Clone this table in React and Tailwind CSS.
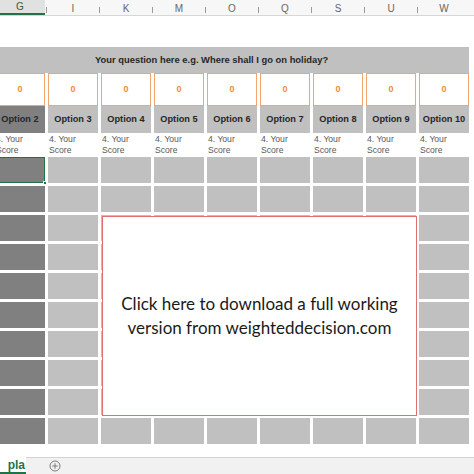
import React from "react";

const letters = ["G", "I", "K", "M", "O", "Q", "S", "U", "W"];
const options = [2, 3, 4, 5, 6, 7, 8, 9, 10];
const rows = Array.from({ length: 10 }, (_, i) => i);

export default function App() {
  return (
    <div className="relative w-[474px] h-[474px] overflow-hidden bg-white font-['Liberation_Sans',Arial,sans-serif]">
      <div className="-ml-[5px] w-[479px] flex flex-col">
        {/* column letters */}
        <div className="flex h-[16px] border-b border-[#d6d6d6] bg-[#f7f7f7]">
          {letters.map((l, i) => (
            <div key={l} className="flex">
              <div
                className={`w-[50px] flex items-end justify-center pb-[1px] text-[10px] leading-none ${
                  i === 0
                    ? "bg-[#e1e1e1] text-[#2d5e3e] border-b-2 border-[#217346]"
                    : "text-[#666]"
                }`}
              >
                {l}
              </div>
              {i < letters.length - 1 && (
                <div className="w-[3px] flex items-end justify-center pb-[2px]">
                  <div className="w-px h-[6px] bg-[#9a9a9a]" />
                </div>
              )}
            </div>
          ))}
        </div>

        <div className="h-[31px]" />

        {/* question */}
        <div className="h-[26px] w-[474px] bg-[#c0c0c0] flex items-center pl-[100px] text-[9.4px] font-bold text-[#262626]">
          Your question here e.g. Where shall I go on holiday?
        </div>

        {/* totals */}
        <div className="flex gap-[3px] h-[33px]">
          {options.map((o) => (
            <div
              key={o}
              className="w-[50px] border border-[#f0a66c] flex items-center justify-center text-[9px] font-bold text-[#ed8c3c]"
            >
              0
            </div>
          ))}
        </div>

        {/* option names */}
        <div className="flex gap-[3px] h-[27px]">
          {options.map((o, i) => (
            <div
              key={o}
              className={`w-[50px] flex items-center justify-center text-[9.2px] font-bold text-[#262626] ${
                i === 0 ? "bg-[#808080]" : "bg-[#c0c0c0]"
              }`}
            >
              Option {o}
            </div>
          ))}
        </div>

        {/* score labels */}
        <div className="flex gap-[3px] h-[24px]">
          {options.map((o) => (
            <div key={o} className="w-[50px] pl-[1px] pt-[1px] text-[8.6px] leading-[11px] text-[#595959]">
              4. Your
              <br />
              Score
            </div>
          ))}
        </div>

        {/* score cells */}
        <div className="flex flex-col gap-[3px]">
          {rows.map((r) => (
            <div key={r} className="flex gap-[3px] h-[26px]">
              {options.map((o, i) => (
                <div
                  key={o}
                  className={`relative w-[50px] ${i === 0 ? "bg-[#808080]" : "bg-[#c0c0c0]"} ${
                    i === 0 && r === 0 ? "border border-[#217346]" : ""
                  }`}
                >
                  {i === 0 && r === 0 && (
                    <div className="absolute -right-[3px] -bottom-[3px] w-[4px] h-[4px] bg-[#217346] border border-white" />
                  )}
                </div>
              ))}
            </div>
          ))}
        </div>

        <div className="h-[13px]" />

        {/* sheet tabs */}
        <div className="flex h-[17px]">
          <div className="w-[31px] bg-white flex items-center justify-end pr-[1px] text-[12px] font-bold text-[#217346] border-b-2 border-[#217346]">
            pla
          </div>
          <div className="flex-1 bg-[#f1f1f1] border-t border-[#d4d4d4] flex items-center pl-[23px]">
            <svg width="12" height="12" viewBox="0 0 12 12">
              <circle cx="6" cy="6" r="5" fill="none" stroke="#7a7a7a" strokeWidth="1" />
              <path d="M6 3.2v5.6M3.2 6h5.6" stroke="#7a7a7a" strokeWidth="1" />
            </svg>
          </div>
        </div>
      </div>

      {/* download overlay */}
      <div className="absolute left-[102px] top-[216px] w-[315px] h-[200px] bg-white border-[1.5px] border-[#e07070] flex flex-col items-center justify-center text-[17px] leading-[24px] text-[#1a1a1a] font-['Lato','Open_Sans',sans-serif]">
        <div>Click here to download a full working</div>
        <div>version from weighteddecision.com</div>
      </div>
    </div>
  );
}
